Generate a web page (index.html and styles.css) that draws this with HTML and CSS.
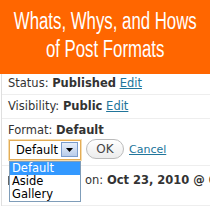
FILE: index.html
```html
<!DOCTYPE html>
<html lang="en">
<head>
  <meta charset="UTF-8">
  <title>Post Formats</title>
  <link rel="stylesheet" href="styles.css">
</head>
<body>
  <div class="banner">
    <p><span>Whats, Whys, and Hows</span></p>
    <p><span>of Post Formats</span></p>
  </div>

  <div class="panel">
    <div class="row first">Status: <b>Published</b> <a href="#">Edit</a></div>
    <div class="row">Visibility: <b>Public</b> <a href="#">Edit</a></div>
    <div class="row format">
      <div>Format: <b>Default</b></div>
      <div class="controls">
        <div class="select">
          <span>Default</span>
          <span class="arrow"><svg width="7" height="4" viewBox="0 0 7 4"><path d="M0 0H7L3.5 4Z" fill="#000"/></svg></span>
        </div>
        <button class="btn">OK</button>
        <a href="#" class="cancel">Cancel</a>
      </div>
      <ul class="options">
        <li class="picked">Default</li>
        <li>Aside</li>
        <li>Gallery</li>
      </ul>
    </div>
    <div class="row date"><span class="cal"></span>Published on: <b>Oct 23, 2010 @ 0</b></div>
  </div>
</body>
</html>
```

FILE: styles.css
```css
body {
  margin: 0;
  font-family: "DejaVu Sans", Verdana, sans-serif;
  font-size: 11.5px;
  color: #333;
  background: #fff;
  overflow: hidden;
}
.banner {
  height: 74px;
  box-sizing: border-box;
  padding-top: 7px;
  background: #ff6600;
  color: #fff;
  font-family: "Liberation Sans", Arial, sans-serif;
  font-size: 23px;
  line-height: 28px;
}
.banner p {
  margin: 0;
  display: flex;
  justify-content: center;
  white-space: nowrap;
}
/* no condensed face installed, so squeeze the regular one */
.banner span {
  flex: none;
  transform: scaleX(0.73);
}
.panel {
  margin-left: 1px;
  border-left: 1px solid #dfdfdf;
}
.row {
  padding: 4px 6px 5px;
  line-height: 14px;
  border-bottom: 1px solid #eee;
  white-space: nowrap;
  overflow: hidden;
}
.row.first {
  padding-top: 2px;
  padding-bottom: 4px;
}
.row b {
  color: #333;
}
a {
  color: #21759b;
}
.format {
  position: relative;
  overflow: visible;
  padding-bottom: 5px;
}
.controls {
  display: flex;
  align-items: center;
  margin-top: 3px;
}
.select {
  width: 72px;
  height: 20px;
  box-sizing: border-box;
  margin-left: 1px;
  border: 1px solid #e3ad57;
  box-shadow: 0 0 0 1px #f6dcae;
  display: flex;
  align-items: flex-start;
  justify-content: space-between;
  padding: 1px 2px 0 6px;
  color: #000;
}
.select span:first-child {
  line-height: 17px;
}
.arrow {
  width: 17px;
  height: 15px;
  box-sizing: border-box;
  border: 1px solid #7b9ccb;
  background: linear-gradient(#e6eefa, #b9cdea);
  display: flex;
  align-items: center;
  justify-content: center;
}
.btn {
  margin-left: 5px;
  width: 38px;
  height: 20px;
  border: 1px solid #bbb;
  border-radius: 11px;
  background: linear-gradient(#fff, #ececec);
  color: #464646;
  font-family: "DejaVu Sans", Verdana, sans-serif;
  font-size: 12px;
  padding: 0;
  margin-top: -2px;
}
.cancel {
  margin-left: 5px;
  font-size: 11px;
}
.options {
  position: absolute;
  left: 7px;
  top: 42px;
  width: 72px;
  box-sizing: border-box;
  margin: 0;
  padding: 0;
  list-style: none;
  border: 1px solid #7f9db9;
  background: #fff;
  color: #000;
}
.options li {
  height: 13px;
  line-height: 13px;
  padding-left: 2px;
}
.options li.picked {
  background: #3399ff;
  color: #fff;
}
.date {
  padding-top: 7px;
  padding-bottom: 18px;
}
.cal {
  display: inline-block;
  width: 14px;
  height: 9px;
  background: #666;
  margin-right: 4px;
  vertical-align: -1px;
}
```
